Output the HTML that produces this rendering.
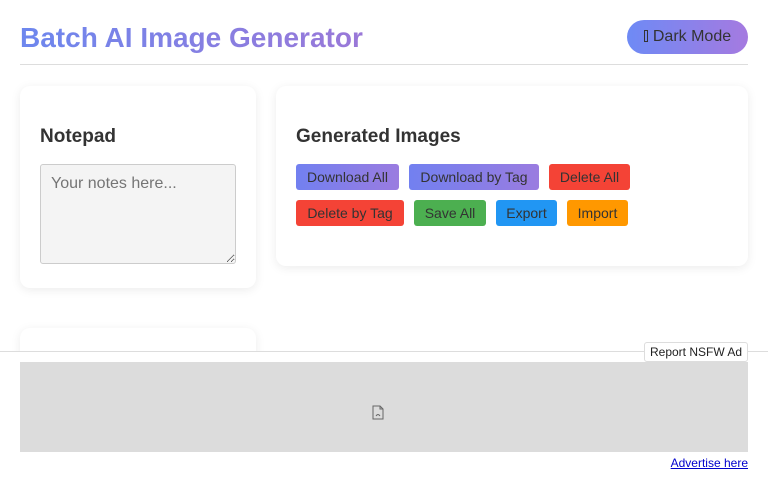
<!DOCTYPE html>
<html><head><style>
*{box-sizing:border-box;margin:0;padding:0}
body{width:768px;height:480px;overflow:hidden;background:#fff;font-family:"Liberation Sans",sans-serif;color:#333;position:relative}
h1{position:absolute;left:20px;top:21px;font-size:28px;font-weight:bold;background:linear-gradient(90deg,#6d87ee,#9a78d8);-webkit-background-clip:text;color:transparent;line-height:34px}
.dm{position:absolute;left:627px;top:20px;width:121px;height:34px;border-radius:17px;background:linear-gradient(90deg,#6e8af5,#a57ae0);font-size:16px;line-height:34px;text-align:center;color:#333}
.dm i{display:inline-block;width:4px;height:12px;border:1px solid #333;vertical-align:-1px;margin-right:5px}
.hr{position:absolute;left:20px;top:64px;width:728px;height:1px;background:#ddd}
.card{position:absolute;background:#fff;border-radius:10px;box-shadow:0 2px 10px rgba(0,0,0,.08)}
h2{font-size:19px;font-weight:bold;color:#333;position:absolute;top:40px}
textarea{position:absolute;left:20px;top:78px;width:196px;height:100px;border:1px solid #ccc;border-radius:3px;background:#f4f4f4;font:16px "Liberation Sans",sans-serif;padding:10px;color:#888;resize:vertical}
.b{position:absolute;height:26px;line-height:27px;font-size:14px;padding:0 10px;border-radius:3px;color:#333;white-space:nowrap;text-align:center}
.p{background:linear-gradient(90deg,#7280f0,#9a7ce0)}
.r{background:#f44336}.g{background:#4caf50}.bl{background:#2196f3}.o{background:#ff9800}
.ad{position:absolute;left:0;top:351px;width:768px;height:129px;background:#fff;border-top:1px solid #ddd}
</style></head><body>
<h1>Batch AI Image Generator</h1>
<div class="dm"><i></i>Dark Mode</div>
<div class="hr"></div>
<div class="card" style="left:20px;top:86px;width:236px;height:202px"><h2 style="left:20px">Notepad</h2><textarea placeholder="Your notes here..."></textarea></div>
<div class="card" style="left:276px;top:86px;width:472px;height:180px"><h2 style="left:20px">Generated Images</h2>
<div class="b p" style="left:20px;top:78px;width:103px">Download All</div>
<div class="b p" style="left:133px;top:78px;width:130px">Download by Tag</div>
<div class="b r" style="left:273px;top:78px;width:81px">Delete All</div>
<div class="b r" style="left:20px;top:114px;width:108px">Delete by Tag</div>
<div class="b g" style="left:138px;top:114px;width:72px">Save All</div>
<div class="b bl" style="left:220px;top:114px;width:61px">Export</div>
<div class="b o" style="left:291px;top:114px;width:61px">Import</div>
</div>
<div class="card" style="left:20px;top:328px;width:236px;height:60px"></div>
<div class="ad">
<div style="position:absolute;left:20px;top:10px;width:728px;height:90px;background:#dcdcdc">
<svg style="position:absolute;left:352px;top:43px" width="12" height="15" viewBox="0 0 12 15"><path d="M1 1h7l3 3v10H1z M8 1v3h3 M4 11q2-3 4 0" fill="none" stroke="#666" stroke-width="1"/></svg></div>
<div style="position:absolute;left:644px;top:-10px;width:104px;height:20px;background:#fff;border:1px solid #ddd;border-radius:3px;font-size:12px;line-height:18px;text-align:center;color:#222">Report NSFW Ad</div>
<a style="position:absolute;right:20px;top:104px;font-size:12px;color:#00c;text-decoration:underline">Advertise here</a>
</div>
</body></html>
